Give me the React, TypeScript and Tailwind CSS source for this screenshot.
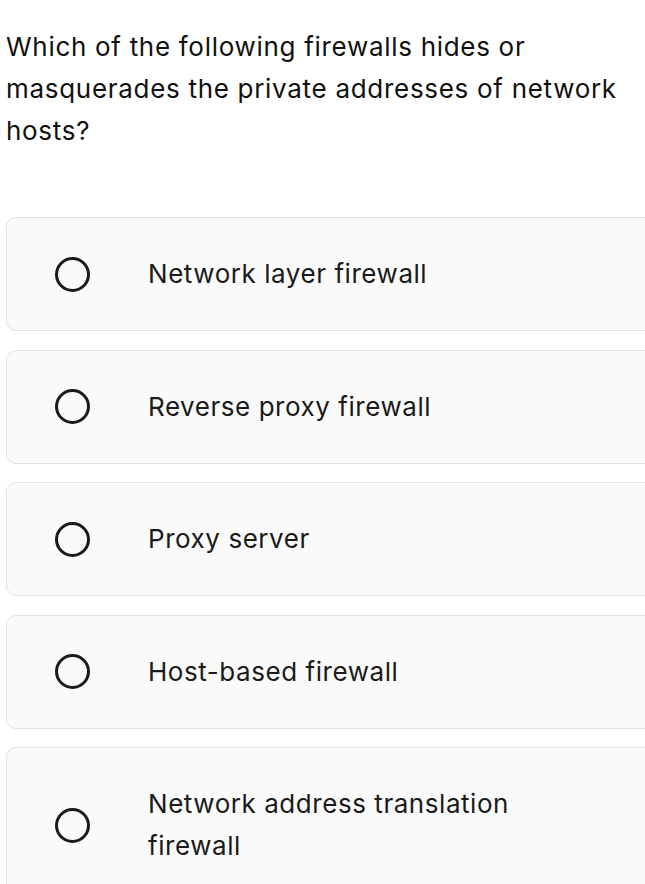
import React from "react";

const options = [
  "Network layer firewall",
  "Reverse proxy firewall",
  "Proxy server",
  "Host-based firewall",
  "Network address translation firewall",
];

export default function App() {
  return (
    <div className="w-[645px] h-[884px] overflow-hidden bg-white text-[#111111]" style={{ fontFamily: "Inter, 'Noto Sans', sans-serif" }}>
      <div className="pt-[26px] pl-[6px] w-[632px]">
        <p className="text-[26px] leading-[42px] tracking-[0.7px]">
          Which of the following firewalls hides or masquerades the private addresses of network hosts?
        </p>
      </div>
      <div className="mt-[65px] pl-[6px] flex flex-col gap-[18.6px]">
        {options.map((o) => (
          <div
            key={o}
            className="w-[660px] flex items-center rounded-[10px] border border-[#e2e2e2] bg-[#fafafa] pl-[48px] py-[35px]"
          >
            <div className="w-[35px] h-[35px] shrink-0 rounded-full border-[3px] border-[#1a1a1a]" />
            <div className="ml-[58px] w-[400px] text-[26px] leading-[42px] tracking-[0.55px] text-[#1a1a1a]">{o}</div>
          </div>
        ))}
      </div>
    </div>
  );
}
